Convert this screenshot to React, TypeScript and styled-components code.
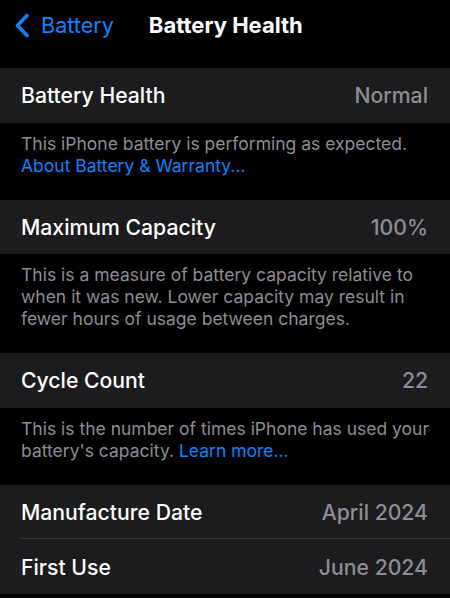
import styled, { createGlobalStyle } from "styled-components";

const GlobalStyle = createGlobalStyle`
  html, body {
    margin: 0;
    padding: 0;
    background: #000;
  }
  body {
    font-family: Inter, "Noto Sans", "Liberation Sans", sans-serif;
    -webkit-font-smoothing: antialiased;
  }
`

const colors = {
  bg: '#000000',
  cell: '#1c1c1e',
  separator: '#38383a',
  label: '#ffffff',
  secondary: '#8d8d93',
  blue: '#0a84ff',
}

const Page = styled.div`
  width: 450px;
  height: 598px;
  overflow: hidden;
  background: ${colors.bg};
  display: flex;
  flex-direction: column;
`

const NavBar = styled.div`
  height: 68px;
  flex-shrink: 0;
  display: flex;
  align-items: flex-start;
  padding: 10px 0 0 14px;
  box-sizing: border-box;
`

const BackButton = styled.div`
  display: flex;
  align-items: center;
  gap: 11px;
  color: ${colors.blue};
  font-size: 21.6px;
  height: 30px;
`

const Title = styled.div`
  margin-left: 35px;
  height: 30px;
  display: flex;
  align-items: center;
  color: ${colors.label};
  font-size: 22px;
  font-weight: 700;
`

const Group = styled.div`
  background: ${colors.cell};
  display: flex;
  flex-direction: column;
  flex-shrink: 0;
`

const Row = styled.div<{ divider?: boolean }>`
  height: 54.6px;
  display: flex;
  align-items: center;
  justify-content: space-between;
  padding-right: 22px;
  margin-left: 21px;
  box-sizing: border-box;
  border-bottom: ${p => p.divider ? `1px solid ${colors.separator}` : 'none'};
`

const Label = styled.span`
  color: ${colors.label};
  font-size: 21.2px;
  font-weight: 500;
`

const Value = styled.span`
  color: ${colors.secondary};
  font-size: 21.2px;
  font-weight: 500;
`

const Footer = styled.div`
  flex-shrink: 0;
  padding: 10px 18px 23px 21px;
  color: ${colors.secondary};
  font-size: 17.5px;
  line-height: 22px;
`

const Link = styled.span`
  color: ${colors.blue};
`

const Chevron = () => (
  <svg width="16" height="25" viewBox="0 0 16 25">
    <path d="M13 2.5 L3.5 12.5 L13 22.5" fill="none" stroke={colors.blue} strokeWidth="3.6" strokeLinecap="round" strokeLinejoin="round" />
  </svg>
)

export default function App() {
  return (
    <Page>
      <GlobalStyle />
      <NavBar>
        <BackButton>
          <Chevron />
          <span>Battery</span>
        </BackButton>
        <Title>Battery Health</Title>
      </NavBar>

      <Group>
        <Row>
          <Label>Battery Health</Label>
          <Value>Normal</Value>
        </Row>
      </Group>
      <Footer>
        This iPhone battery is performing as expected.<br />
        <Link>About Battery &amp; Warranty...</Link>
      </Footer>

      <Group>
        <Row>
          <Label>Maximum Capacity</Label>
          <Value>100%</Value>
        </Row>
      </Group>
      <Footer>
        This is a measure of battery capacity relative to when it was new. Lower capacity may result in fewer hours of usage between charges.
      </Footer>

      <Group>
        <Row>
          <Label>Cycle Count</Label>
          <Value>22</Value>
        </Row>
      </Group>
      <Footer>
        This is the number of times iPhone has used your battery's capacity. <Link>Learn more...</Link>
      </Footer>

      <Group>
        <Row divider>
          <Label>Manufacture Date</Label>
          <Value>April 2024</Value>
        </Row>
        <Row>
          <Label>First Use</Label>
          <Value>June 2024</Value>
        </Row>
      </Group>
    </Page>
  )
}
